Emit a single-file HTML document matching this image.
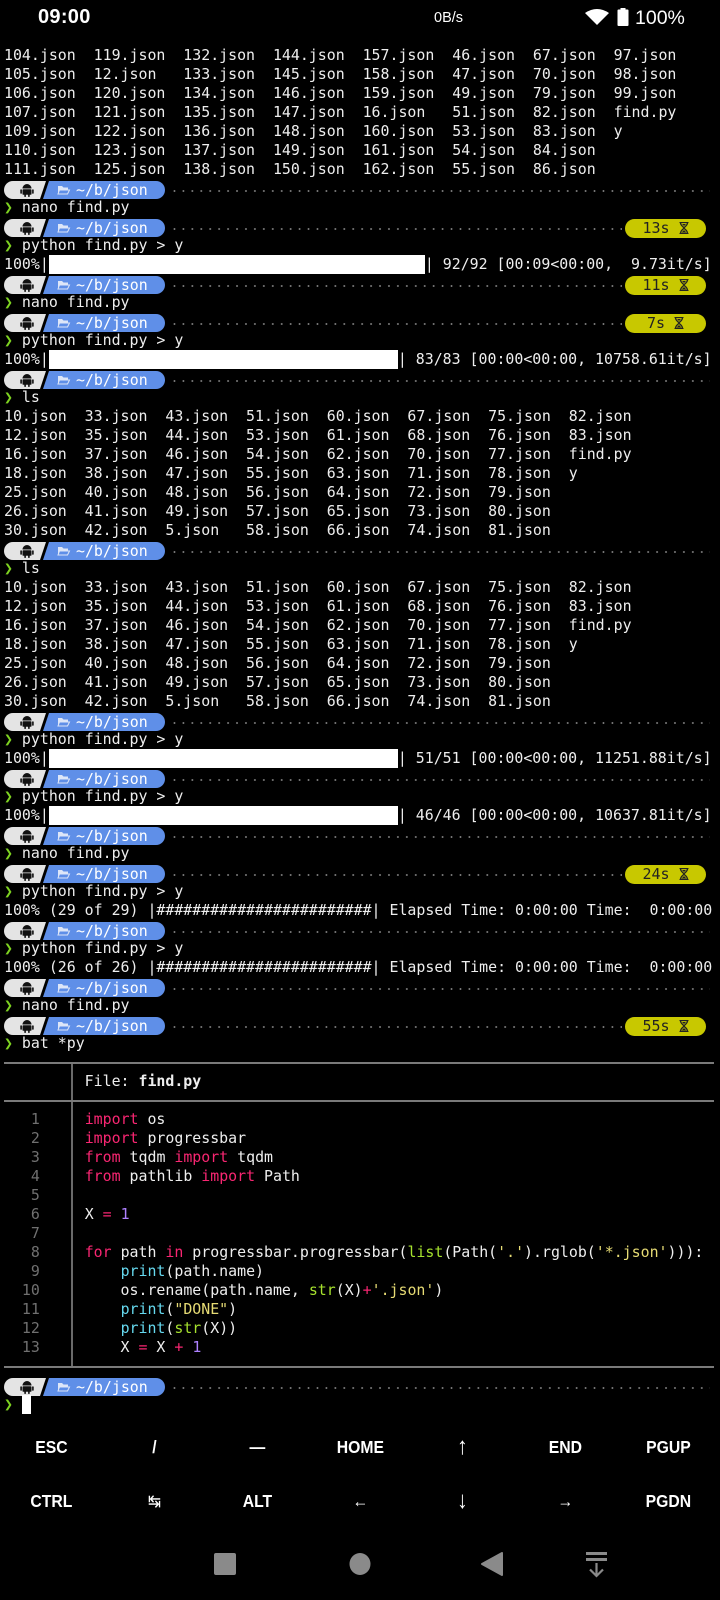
<!DOCTYPE html>
<html><head><meta charset="utf-8"><style>
*{margin:0;padding:0;box-sizing:border-box}
body{width:720px;height:1600px;background:#000;color:#eee;overflow:hidden;position:relative;font-family:"DejaVu Sans Mono","Liberation Mono",monospace}
#st{position:absolute;top:0;left:0;width:720px;height:40px;font-family:"Liberation Sans",sans-serif;color:#fff}
#term{position:absolute;top:46.4px;left:0;width:720px}
.l{height:19px;line-height:19px;font-size:14.9px;white-space:pre;padding-left:4px;position:relative}
.g{color:#7ed321}
.p{position:relative}
.seg{position:absolute;left:4px;top:2px}
.dots{position:absolute;left:170px;top:10.5px;height:2px;background:radial-gradient(circle,#777 0.8px,transparent 1.1px) 0 0/8.95px 2px repeat-x}
.badge{position:absolute;left:625px;top:1.5px;width:81px;height:19px;border-radius:9.5px;background:#c8c800;color:#222;font-size:15px;line-height:19px;text-align:center;font-family:"DejaVu Sans Mono",monospace}
.bar{display:inline-block;background:#fff;height:19px;vertical-align:top}
.k{color:#f92672}.f{color:#66d9ef}.b{color:#a6e22e}.s{color:#e6db74}.n{color:#ae81ff}
.ln{color:#707070}
.hs{position:absolute;left:4px;right:6px;top:9px;height:2px;background:#7a7a7a}
#vl{position:absolute;left:71px;top:1062px;width:1.5px;height:305px;background:#6a6a6a}
#kb{position:absolute;top:1420px;left:0;width:720px;font-family:"Liberation Sans",sans-serif;color:#fff;font-size:17.5px;font-weight:bold}
.kr{display:flex;height:54px;align-items:center}
.kr div{width:102.86px;text-align:center;transform:scaleX(0.9)}
#nav{position:absolute;top:1545px;left:0;width:720px;height:40px}
</style></head><body>
<div id="st">
<div style="position:absolute;left:38px;top:6px;font-size:20px;font-weight:bold;letter-spacing:0.3px">09:00</div>
<div style="position:absolute;left:434px;top:10px;font-size:14.5px">0B/s</div>
<svg style="position:absolute;left:584px;top:8px" width="26" height="18" viewBox="0 0 26 18"><path d="M1 5 Q13 -3 25 5 L13 17 Z" fill="#fff"/></svg>
<svg style="position:absolute;left:617px;top:8px" width="12" height="18" viewBox="0 0 12 18"><rect x="3.5" y="0" width="5" height="2" fill="#fff"/><rect x="0.5" y="1.5" width="11" height="16.5" rx="1" fill="#fff"/></svg>
<div style="position:absolute;left:635px;top:7px;font-size:19.5px">100%</div>
</div>

<div id="vl"></div>
<div id="term">
<div class="l">104.json  119.json  132.json  144.json  157.json  46.json  67.json  97.json</div>
<div class="l">105.json  12.json   133.json  145.json  158.json  47.json  70.json  98.json</div>
<div class="l">106.json  120.json  134.json  146.json  159.json  49.json  79.json  99.json</div>
<div class="l">107.json  121.json  135.json  147.json  16.json   51.json  82.json  find.py</div>
<div class="l">109.json  122.json  136.json  148.json  160.json  53.json  83.json  y</div>
<div class="l">110.json  123.json  137.json  149.json  161.json  54.json  84.json</div>
<div class="l">111.json  125.json  138.json  150.json  162.json  55.json  86.json</div>
<div class="l p" data-p></div>
<div class="l"><span class="g">❯</span> nano find.py</div>
<div class="l p" data-p="13s"></div>
<div class="l"><span class="g">❯</span> python find.py &gt; y</div>
<div class="l">100%|<span class="bar" style="width:376px"></span>| 92/92 [00:09&lt;00:00,  9.73it/s]</div>
<div class="l p" data-p="11s"></div>
<div class="l"><span class="g">❯</span> nano find.py</div>
<div class="l p" data-p="7s"></div>
<div class="l"><span class="g">❯</span> python find.py &gt; y</div>
<div class="l">100%|<span class="bar" style="width:349px"></span>| 83/83 [00:00&lt;00:00, 10758.61it/s]</div>
<div class="l p" data-p></div>
<div class="l"><span class="g">❯</span> ls</div>
<div class="l">10.json  33.json  43.json  51.json  60.json  67.json  75.json  82.json</div>
<div class="l">12.json  35.json  44.json  53.json  61.json  68.json  76.json  83.json</div>
<div class="l">16.json  37.json  46.json  54.json  62.json  70.json  77.json  find.py</div>
<div class="l">18.json  38.json  47.json  55.json  63.json  71.json  78.json  y</div>
<div class="l">25.json  40.json  48.json  56.json  64.json  72.json  79.json</div>
<div class="l">26.json  41.json  49.json  57.json  65.json  73.json  80.json</div>
<div class="l">30.json  42.json  5.json   58.json  66.json  74.json  81.json</div>
<div class="l p" data-p></div>
<div class="l"><span class="g">❯</span> ls</div>
<div class="l">10.json  33.json  43.json  51.json  60.json  67.json  75.json  82.json</div>
<div class="l">12.json  35.json  44.json  53.json  61.json  68.json  76.json  83.json</div>
<div class="l">16.json  37.json  46.json  54.json  62.json  70.json  77.json  find.py</div>
<div class="l">18.json  38.json  47.json  55.json  63.json  71.json  78.json  y</div>
<div class="l">25.json  40.json  48.json  56.json  64.json  72.json  79.json</div>
<div class="l">26.json  41.json  49.json  57.json  65.json  73.json  80.json</div>
<div class="l">30.json  42.json  5.json   58.json  66.json  74.json  81.json</div>
<div class="l p" data-p></div>
<div class="l"><span class="g">❯</span> python find.py &gt; y</div>
<div class="l">100%|<span class="bar" style="width:349px"></span>| 51/51 [00:00&lt;00:00, 11251.88it/s]</div>
<div class="l p" data-p></div>
<div class="l"><span class="g">❯</span> python find.py &gt; y</div>
<div class="l">100%|<span class="bar" style="width:349px"></span>| 46/46 [00:00&lt;00:00, 10637.81it/s]</div>
<div class="l p" data-p></div>
<div class="l"><span class="g">❯</span> nano find.py</div>
<div class="l p" data-p="24s"></div>
<div class="l"><span class="g">❯</span> python find.py &gt; y</div>
<div class="l">100% (29 of 29) |########################| Elapsed Time: 0:00:00 Time:  0:00:00</div>
<div class="l p" data-p></div>
<div class="l"><span class="g">❯</span> python find.py &gt; y</div>
<div class="l">100% (26 of 26) |########################| Elapsed Time: 0:00:00 Time:  0:00:00</div>
<div class="l p" data-p></div>
<div class="l"><span class="g">❯</span> nano find.py</div>
<div class="l p" data-p="55s"></div>
<div class="l"><span class="g">❯</span> bat *py</div>
<div class="l"><div class="hs"></div></div>
<div class="l">         File: <b>find.py</b></div>
<div class="l"><div class="hs"></div></div>
<div class="l"><span class="ln">   1</span>     <span class="k">import</span> os</div>
<div class="l"><span class="ln">   2</span>     <span class="k">import</span> progressbar</div>
<div class="l"><span class="ln">   3</span>     <span class="k">from</span> tqdm <span class="k">import</span> tqdm</div>
<div class="l"><span class="ln">   4</span>     <span class="k">from</span> pathlib <span class="k">import</span> Path</div>
<div class="l"><span class="ln">   5</span></div>
<div class="l"><span class="ln">   6</span>     X <span class="k">=</span> <span class="n">1</span></div>
<div class="l"><span class="ln">   7</span></div>
<div class="l"><span class="ln">   8</span>     <span class="k">for</span> path <span class="k">in</span> progressbar.progressbar(<span class="b">list</span>(Path(<span class="s">'.'</span>).rglob(<span class="s">'*.json'</span>))):</div>
<div class="l"><span class="ln">   9</span>         <span class="f">print</span>(path.name)</div>
<div class="l"><span class="ln">  10</span>         os.rename(path.name, <span class="b">str</span>(X)<span class="k">+</span><span class="s">'.json'</span>)</div>
<div class="l"><span class="ln">  11</span>         <span class="f">print</span>(<span class="s">"DONE"</span>)</div>
<div class="l"><span class="ln">  12</span>         <span class="f">print</span>(<span class="b">str</span>(X))</div>
<div class="l"><span class="ln">  13</span>         X <span class="k">=</span> X <span class="k">+</span> <span class="n">1</span></div>
<div class="l"><div class="hs"></div></div>
<div class="l p" data-p></div>
<div class="l"><span class="g">❯</span> <span style="display:inline-block;width:8.95px;height:19px;background:#fff;vertical-align:top"></span></div>
</div>

<div id="kb">
<div class="kr"><div>ESC</div><div>/</div><div>—</div><div>HOME</div><div style="font-size:24px;font-weight:normal">↑</div><div>END</div><div>PGUP</div></div>
<div class="kr"><div>CTRL</div><div style="font-weight:normal">↹</div><div>ALT</div><div style="font-weight:normal">←</div><div style="font-size:24px;font-weight:normal">↓</div><div style="font-weight:normal">→</div><div>PGDN</div></div>
</div>

<div id="nav">
<svg width="720" height="40" viewBox="0 0 720 40">
<rect x="214" y="8" width="22" height="22" rx="2" fill="#8a8a8a"/>
<ellipse cx="360" cy="19" rx="10.5" ry="11" fill="#8a8a8a"/>
<path d="M502 8 L502 30 L482 19 Z" fill="#8a8a8a" stroke="#8a8a8a" stroke-width="2" stroke-linejoin="round"/>
<rect x="586" y="7" width="21" height="3" fill="#8a8a8a"/>
<rect x="586" y="13" width="21" height="3" fill="#8a8a8a"/>
<path d="M596.5 18 V31 M590 24.5 L596.5 31 L603 24.5" stroke="#8a8a8a" stroke-width="2.2" fill="none"/>
</svg>
</div>

<template id="segt">
<svg class="seg" width="162" height="18" viewBox="0 0 162 18">
<path d="M9 0 H42 L36 18 H9 A9 9 0 0 1 9 0Z" fill="#e4e4e4"/>
<path d="M45 0 H152 A9 9 0 0 1 152 18 H39 Z" fill="#5f8fe8"/>
<g fill="#111"><path d="M18.5 7.5 A4.5 4.5 0 0 1 27.5 7.5 Z"/><rect x="18.5" y="8.3" width="9" height="5.5" rx="0.8"/><rect x="16.3" y="8.3" width="1.6" height="4.5" rx="0.8"/><rect x="28.1" y="8.3" width="1.6" height="4.5" rx="0.8"/><rect x="20.3" y="13" width="1.6" height="3" rx="0.8"/><rect x="24.1" y="13" width="1.6" height="3" rx="0.8"/></g>
<path d="M54 5 H58 L59.5 6.5 H64 V13 H54 Z" fill="#dde6f8"/>
<path d="M55.5 9 H65.5 L63.5 13 H54 Z" fill="#5f8fe8" stroke="#dde6f8" stroke-width="1"/>
<text x="72" y="14" fill="#fff" font-family="DejaVu Sans Mono, monospace" font-size="14.9">~/b/json</text>
</svg>
</template>
<script>
var t=document.getElementById('segt').innerHTML;
document.querySelectorAll('[data-p]').forEach(function(e){
 var v=e.getAttribute('data-p');
 var h=t+'<div class="dots" style="width:'+(v?452:540)+'px"></div>';
 if(v)h+='<div class="badge">'+v+' <svg width="10" height="12" viewBox="0 0 10 12" style="vertical-align:-1px"><path d="M0.5 0.5 H9.5 M0.5 11.5 H9.5 M1.5 0.5 C1.5 4 5 5 5 6 C5 7 1.5 8 1.5 11.5 M8.5 0.5 C8.5 4 5 5 5 6 C5 7 8.5 8 8.5 11.5" stroke="#222" stroke-width="1.3" fill="none"/><path d="M2.5 10.5 L5 8 L7.5 10.5 Z M3 2 H7 L5 4 Z" fill="#222"/></svg></div>';
 e.innerHTML=h;
});
</script>
</body></html>
